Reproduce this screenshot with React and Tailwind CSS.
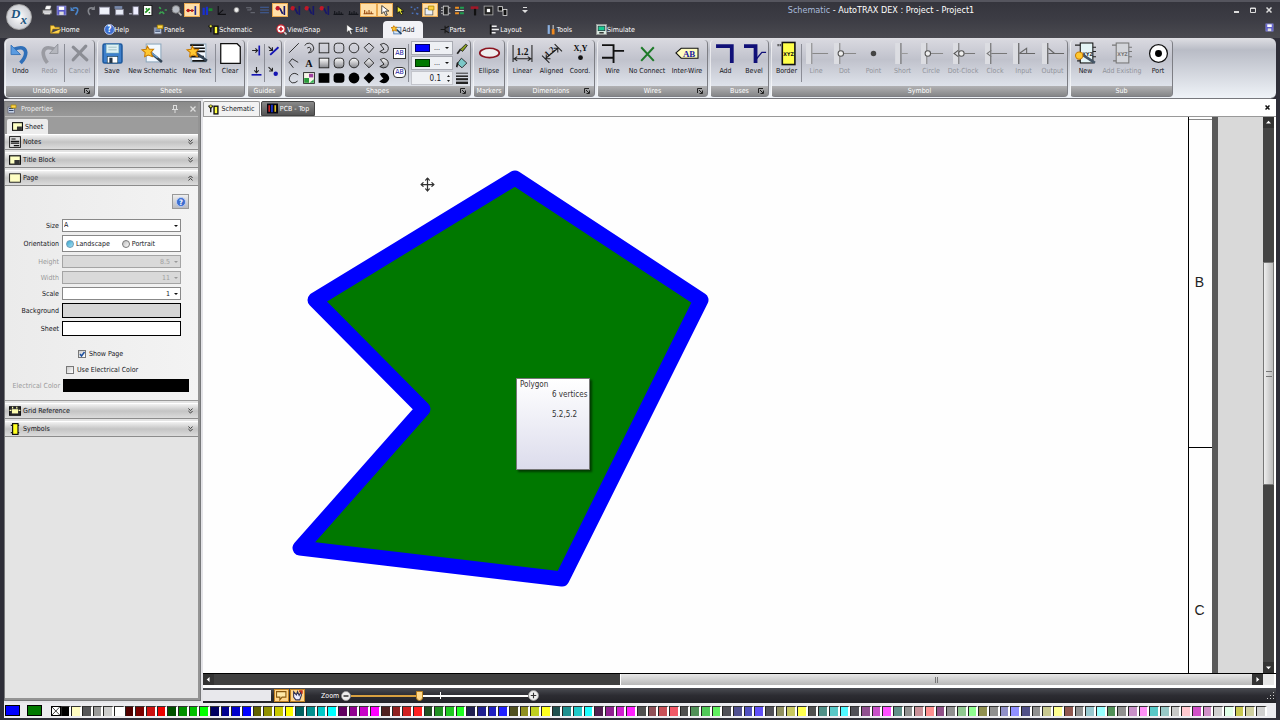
import React, { useState } from 'react';
import { Move } from 'lucide-react';

const tabs = ['Home', 'Help', 'Panels', 'Schematic', 'View/Snap', 'Edit', 'Add', 'Parts', 'Layout', 'Tools', 'Simulate'];

const palette = (
  'x 000000 fffcc0 555558 999999 cccccc ffffff 500000 7a0000 cc1010 ee0000 005000 009000 00c000 00ff00 ' +
  '000060 000090 0000cc 0000ff 606000 909000 c8c800 ffff00 006060 009090 00c8c8 00ffff 600060 900090 c800c8 ff00ff ' +
  '502020 902020 d02020 ff2020 205020 209020 20c820 20ff20 202050 202090 2020c0 2020ff 505020 909020 c0d020 ffff20 ' +
  '205050 209090 20c8c8 20ffff 502050 902090 d020d0 ff20ff 505050 905058 c85058 f05868 505050 509058 50c858 60f060 ' +
  '505058 505090 5050c0 6050f8 505058 909060 c8c860 ffff50 505050 509088 58c8c8 50f8ff 505058 905090 c850c8 ff50ff ' +
  '609088 909090 c89098 ff9090 905088 909090 90c890 90ff90 909050 909090 9090c8 9090ff 505088 909090 c8c890 ffff90 ' +
  '905850 909090 98c8d0 98ffff 509058 909090 c890c8 ff90f8 58c8c8 98c8c8 c8c8c8 ffc8d0 d050c8 d090c8 d0d0d0 e0ffe8 ' +
  'c8c850 d0d0a0 d0d0d0'
).split(' ');

const Svg = ({ size = 20, children, className = '' }) => (
  <svg width={size} height={size} viewBox="0 0 20 20" fill="none" stroke="#222" strokeWidth="1.5" className={`shrink-0 ${className}`} aria-hidden="true">
    {children}
  </svg>
);

const star = 'M5 3l2 3 4 0-2.5 3 1.5 4-4-1.5L2.500 13 3 9 0 6.500l4-.5z';

const art = {
  // ribbon
  undo: <><path d="M4 6q10-4 11 3 0 5-5 10" stroke="#2f6fb8" strokeWidth="3.500" /><path d="M1 2v9h9z" fill="#5b9be0" stroke="#2f6fb8" strokeWidth=".8" /></>,
  redo: <><path d="M15 6Q5 2 4 9q0 5 4 10" stroke="#9a9ba2" strokeWidth="3.500" /><path d="M18 1v9H10z" fill="#b4b6bd" stroke="#8e9097" strokeWidth=".8" /></>,
  cancel: <><path d="M4 4l13 12M16 3L4 16" stroke="#8b8d94" strokeWidth="3" strokeLinecap="round" /></>,
  save: <><rect x="1" y="1" width="18" height="18" rx="1.500" fill="#3d7fcb" stroke="#1e5a9e" /><rect x="4" y="1.500" width="12" height="8" fill="#dff1f5" stroke="#8bb" strokeWidth=".5" /><path d="M6 4h8M6 6.500h8" stroke="#9bb" strokeWidth=".8" /><rect x="5" y="13" width="10" height="6" fill="#fff" stroke="#245" strokeWidth=".6" /><rect x="7" y="14" width="3" height="5" fill="#234" stroke="none" /></>,
  newSheet: <><rect x="4" y="1" width="14" height="17" fill="#f3f9ff" stroke="#8ea9bd" strokeWidth="1" /><path d="M8 9l11 9" stroke="#345" strokeWidth="2.500" /><path d="M8 9l7 5" stroke="#6aa0d0" strokeWidth="1.500" /><path d={star} fill="#ffc830" stroke="#c87a00" strokeWidth="1" /></>,
  newText: <><rect x="4" y="1" width="14" height="17" fill="#f3f9ff" stroke="#8ea9bd" strokeWidth="1" /><path d="M3 2h13M6 5h11M8 8h9M3 13h13M5 17h13" stroke="#111" strokeWidth="1.600" /><path d="M8 9l11 8" stroke="#345" strokeWidth="2.500" /><path d={star} fill="#ffc830" stroke="#c87a00" strokeWidth="1" /></>,
  clear: <path d="M.7.700h15.600l3 3v15.600H.7z" fill="#fff" stroke="#111" strokeWidth="1.200" />,
  ellipse: <ellipse cx="10" cy="9.500" rx="9.300" ry="4.500" fill="#eee" stroke="#8c1420" strokeWidth="1.600" />,
  linear: <><path d="M1 2v16M19 2v16M2 15h16M5 13l-3 2 3 2M15 13l3 2-3 2" strokeWidth="1" /><text x="10" y="11" textAnchor="middle" fontSize="9" fontWeight="bold" fontFamily="Liberation Serif, serif" fill="#111" stroke="none">1.2</text></>,
  aligned: <><path d="M1 12l7 7M13 1l7 7M4 15L16 5M5 11v4h4M12 5h4v4" strokeWidth="1" /><text x="8" y="11" textAnchor="middle" fontSize="8" fontWeight="bold" fontFamily="Liberation Serif, serif" fill="#111" stroke="none" transform="rotate(-42 8 8)">1.2</text></>,
  coord: <><text x="10" y="8" textAnchor="middle" fontSize="8" fontWeight="bold" fontFamily="Liberation Serif, serif" fill="#111" stroke="none">X,Y</text><circle cx="10" cy="14" r="2.300" fill="#111" stroke="none" /></>,
  wire: <path d="M0 2h11v17M0 14h11M11 7.500h10" strokeWidth="1.800" stroke="#111" />,
  noConnect: <path d="M4 4l12 13M16 4L4 17" stroke="#1d7a28" strokeWidth="1.900" />,
  interWire: <><path d="M-1 9.500L4 5h16v9.500H4z" fill="#fffdc0" stroke="#111" strokeWidth="1" /><text x="11.500" y="13" textAnchor="middle" fontSize="8.500" fontWeight="bold" fontFamily="Liberation Serif, serif" fill="#1818a0" stroke="none">AB</text></>,
  busAdd: <path d="M1 3h15v16" stroke="#101078" strokeWidth="3.600" />,
  busBevel: <><path d="M0 3h11v16" stroke="#101078" strokeWidth="3.600" /><path d="M12 15l5-6h4" stroke="#101078" strokeWidth="1.200" /></>,
  border: <><rect x="6" y="-.5" width="12" height="21" fill="#ffff4a" stroke="#111" /><text x="12" y="12" textAnchor="middle" fontSize="5" fontWeight="bold" fill="#111" stroke="none">XYZ</text><path d="M2 1v2M4 1v2" strokeWidth="1" /></>,
  port: <><circle cx="10" cy="10" r="8.500" fill="#fff" stroke="#111" strokeWidth="1.200" /><circle cx="10" cy="10" r="3.300" fill="#000" stroke="none" /></>,
  subNew: <><rect x="5" y="0" width="12" height="19" fill="#e4f4f6" stroke="#111" strokeWidth="1" /><path d="M0 2h5M17 4h3M17 8h3M2 17h3M17 13h3" strokeWidth="1" /><text x="12" y="12" textAnchor="middle" fontSize="5" fontWeight="bold" fill="#333" stroke="none">XYZ</text><path d="M7 11l12 8" stroke="#456" strokeWidth="2.500" /><circle cx="4" cy="12" r="3.500" fill="#ffc830" stroke="#c87a00" strokeWidth="1" /></>,
  subAdd: <><rect x="4" y="0" width="12" height="19" fill="#d3d5da" stroke="#777" strokeWidth="1" /><path d="M0 2h4M16 4h3M16 8h3M1 17h3M16 13h3" stroke="#777" strokeWidth="1" /><text x="10" y="12" textAnchor="middle" fontSize="5" fontWeight="bold" fill="#777" stroke="none">XYZ</text></>,
  pLine: <><path d="M2.500 0v20" stroke="#dcdde2" strokeWidth="5" /><path d="M5.500 0v20" stroke="#888" strokeWidth="1" /><path d="M6 10h15" stroke="#888" strokeWidth="1" /></>,
  pDot: <><path d="M2.500 0v20" stroke="#dcdde2" strokeWidth="5" /><path d="M5.500 0v20M9 10h12" stroke="#888" strokeWidth="1" /><circle cx="6.500" cy="10" r="2.600" fill="#eee" stroke="#555" strokeWidth="1" /></>,
  pPoint: <circle cx="10" cy="10" r="2.600" fill="#444" stroke="none" />,
  pShort: <><path d="M5.500 0v20" stroke="#dcdde2" strokeWidth="5" /><path d="M8.500 0v20" stroke="#666" strokeWidth="1" /><path d="M9 10h6" stroke="#999" strokeWidth="1" /></>,
  pClock: <><path d="M2.500 0v20" stroke="#dcdde2" strokeWidth="5" /><path d="M5.500 0v20" stroke="#666" strokeWidth="1" /><path d="M6 7l-4 3 4 3M6 10h15" stroke="#777" strokeWidth="1" /></>,
  pDotClock: <><path d="M2.500 0v20" stroke="#dcdde2" strokeWidth="5" /><path d="M5.500 0v20M11 10h10" stroke="#777" strokeWidth="1" /><path d="M5 7l-4 3 4 3" stroke="#555" strokeWidth="1" /><circle cx="8" cy="10" r="2.600" fill="#eee" stroke="#555" strokeWidth="1" /></>,
  pInput: <><path d="M2.500 0v20" stroke="#dcdde2" strokeWidth="5" /><path d="M5.500 0v20" stroke="#555" strokeWidth="1" /><path d="M6 10l7-5v5M6 10h15" stroke="#666" strokeWidth="1" /></>,
  pOutput: <><path d="M2.500 0v20" stroke="#dcdde2" strokeWidth="5" /><path d="M5.500 0v20" stroke="#555" strokeWidth="1" /><path d="M6 5l6 5M6 10h15" stroke="#666" strokeWidth="1" /></>,
  // guides
  gV: <><path d="M15 1v18" stroke="#1414b4" strokeWidth="3" /><path d="M2 10h9M8 6l4 4-4 4" strokeWidth="2" /></>,
  gD: <><path d="M4 18L19 4" stroke="#1414b4" strokeWidth="3.500" /><path d="M1 3l7 7M8 4v6H2" strokeWidth="2" /></>,
  gH: <><path d="M1 16h18" stroke="#1414b4" strokeWidth="3" /><path d="M10 2v9M6 8l4 4 4-4" strokeWidth="2" /></>,
  gP: <><circle cx="14" cy="14" r="4" fill="#1414b4" stroke="none" /><path d="M1 2l7 7M8 3v6H2" strokeWidth="2" /></>,
  // tabs
  Home: <path d="M1 17V3h6l2 3h8v3H5L2 17h14l4-8" fill="#ffd44d" stroke="#b98a12" strokeWidth="1.200" />,
  Help: <><circle cx="10" cy="10" r="9" fill="#3d6fd0" stroke="#c9d8ff" /><text x="10" y="15" textAnchor="middle" fontSize="15" fontWeight="bold" fill="#fff" stroke="none">?</text></>,
  Panels: <><rect x="2" y="6" width="13" height="12" fill="#c4d3e8" stroke="#667" /><path d="M4 9h9M4 13h9" stroke="#346" strokeWidth="2" /><path d="M8 2h10v6H8z" fill="#ffd44d" stroke="#a80" /></>,
  Schematic: <><path d="M1 3l4 5 4-5M5 8v7" stroke="#111" strokeWidth="2.500" /><circle cx="5" cy="4" r="2.500" fill="#e8e840" stroke="#111" strokeWidth="1" /><rect x="11" y="4" width="7" height="14" fill="#ffff3a" stroke="#111" strokeWidth="2.500" /></>,
  'View/Snap': <><path d="M13 13l6 6" stroke="#ccc" strokeWidth="3" /><circle cx="9" cy="9" r="7.500" fill="#fff" stroke="#c81e28" strokeWidth="2" /><path d="M9 5v8M5 9h8" stroke="#c81e28" strokeWidth="3" /></>,
  Edit: <path d="M5 1v15l4-4 3 7 3-1-3-7h6z" fill="#fff" stroke="#222" strokeWidth="1" />,
  Add: <><rect x="5" y="6" width="13" height="12" fill="#d8e8fa" stroke="#4a78b0" /><path d="M10 10l9 8" stroke="#246" strokeWidth="3" /><path d={star} fill="#ffc830" stroke="#c87a00" /></>,
  Parts: <path d="M3 10h8M11 3v14M11 8l7-4M11 12l7 4" stroke="#181818" strokeWidth="2" />,
  Layout: <><path d="M3 1v18" stroke="#111" strokeWidth="3" /><path d="M5 4h9M5 10h13M5 16h7" stroke="#eee" strokeWidth="2.500" /></>,
  Tools: <><path d="M5 2v16" stroke="#8bb0e0" strokeWidth="4" /><path d="M13 2v9" stroke="#ccc" strokeWidth="2" /><path d="M13 9v10" stroke="#f08a20" strokeWidth="5" /></>,
  Simulate: <><rect x="1" y="1" width="18" height="18" fill="#d8e8e0" stroke="#999" /><rect x="4" y="4" width="12" height="8" fill="#18c890" stroke="#244" /><path d="M6 16h8" strokeWidth="2.500" /></>,
  // quick access
  print: <><path d="M6 8l2-6h8l-2 6" fill="#fff" stroke="#ddd" /><path d="M1 9h17v7H1z" fill="#d0d0d4" stroke="#555" /><path d="M4 16h11" stroke="#fff" strokeWidth="2" /></>,
  qSave: <><rect x="2" y="2" width="16" height="16" fill="#5858c8" stroke="#9090e0" /><rect x="5" y="3" width="10" height="6" fill="#fff" stroke="none" /><rect x="6" y="12" width="8" height="6" fill="#ddd" stroke="none" /></>,
  qUndo: <><path d="M5 6q10-3 9 4-1 5-4 8" stroke="#4a86cc" strokeWidth="3" /><path d="M1 3v8h8z" fill="#4a86cc" stroke="none" /></>,
  qRedo: <><path d="M16 6Q6 3 6 11q0 4 3 7" stroke="#83858c" strokeWidth="3" /><path d="M18 2v7h-7z" fill="#83858c" stroke="none" /></>,
  qPage: <rect x="1" y="4" width="18" height="13" fill="#eef1fa" stroke="#99a" />,
  qSplitH: <><rect x="3" y="8" width="14" height="10" fill="#e8ecf8" stroke="#889" /><rect x="1" y="2" width="14" height="5" fill="#7788aa" stroke="none" /></>,
  qSplitV: <><rect x="9" y="3" width="10" height="15" fill="#eef" stroke="#778" /><path d="M2 16h5" stroke="#ccd" strokeWidth="2" /></>,
  qFit: <><rect x="3" y="1" width="15" height="18" fill="#fff" stroke="#111" /><path d="M6 14l8-8M7 6l2 2M13 13l1 2" stroke="#169016" strokeWidth="3" /></>,
  qSel: <path d="M4 4l3 3M9 12l4 4M14 9h4M4 16l4-4" stroke="#3aa050" strokeWidth="3" />,
  qZoom: <><circle cx="9" cy="8" r="7" fill="#b8bcc4" stroke="#777" /><path d="M14 14l5 5" stroke="#bbb" strokeWidth="3" /></>,
  qSnap: <><path d="M5 10h9M1 10h2" strokeWidth="2" /><circle cx="4" cy="10" r="3" fill="#c01818" stroke="none" /><circle cx="11" cy="10" r="2.500" fill="#c01818" stroke="none" /><path d="M17 2v16" stroke="#222a90" strokeWidth="3" /></>,
  qBlocks: <><path d="M3 5v13M9 3v15" stroke="#1830d0" strokeWidth="4" /><path d="M12 6h7v5h-7z" fill="#1b8a30" stroke="none" /></>,
  qAxis: <path d="M4 2v15h14M4 17l9-8" stroke="#101014" strokeWidth="2" />,
  qDot: <circle cx="10" cy="9" r="4.500" fill="#eee" stroke="#888" />,
  qDim: <path d="M2 5h9v4H4M10 14h8" stroke="#777a84" />,
  qLines: <path d="M2 4h16M2 9h16M2 14h16" stroke="#4060a0" strokeWidth="2" />,
  qPins: <><circle cx="5" cy="6" r="4" fill="#c01828" stroke="none" /><path d="M9 6l5 10M17 2v16" stroke="#181868" strokeWidth="3" /></>,
  qRuler: <path d="M1 17h18M3 17v-6M7 17v-4M11 17v-6M15 17v-4" stroke="#14161c" strokeWidth="2" />,
  qRulerOn: <path d="M1 16h18M3 16v-7M7 16v-4M11 16v-7M15 16v-4" stroke="#9a4a10" strokeWidth="2" />,
  qPointer: <path d="M5 1v15l4-4 3 7 3-1-3-7h6z" fill="#fff" stroke="#222" />,
  qPick: <path d="M4 2v13l4-3 3 6 3-2-3-5h5z" fill="#e8e830" stroke="#111" />,
  qNodes: <path d="M3 4h3M9 8h3M5 15h3M14 5h3M13 15l4 2" stroke="#4a70b8" strokeWidth="3" />,
  qPanel: <><rect x="2" y="6" width="14" height="12" fill="#e8eef8" stroke="#666" /><path d="M8 2h10v7H8z" fill="#ffcf40" stroke="#a80" /></>,
  qChip: <><rect x="6" y="2" width="9" height="16" fill="#222" stroke="#ddd" /><path d="M2 5h3M2 10h3M2 15h3M16 5h3M16 15h3" stroke="#ddd" /></>,
  qComp: <><path d="M2 5h7M2 15h7" stroke="#f09020" strokeWidth="4" /><path d="M11 5h7M11 15h7" stroke="#20a050" strokeWidth="4" /><path d="M2 10h16" stroke="#ddd" strokeWidth="2" /></>,
  qHammer: <><path d="M3 5h14" stroke="#a01828" strokeWidth="5" /><path d="M11 7v12" stroke="#111" strokeWidth="4" /></>,
  qTarget: <><rect x="2" y="2" width="16" height="16" fill="#222" stroke="#aaa" /><rect x="7" y="7" width="6" height="6" fill="#fff" stroke="none" /></>,
  qCopy: <><rect x="2" y="3" width="8" height="8" fill="#111" stroke="#ddd" /><rect x="11" y="8" width="7" height="11" fill="#111" stroke="#ddd" /></>,
  // property panel
  sheet: <><rect x="1" y="3" width="18" height="14" fill="#fdffc4" stroke="#111" strokeWidth="2" /><path d="M9 10h9v7H9z" fill="#333" stroke="none" /></>,
  notes: <><rect x="1" y="1" width="18" height="18" fill="#ddd" stroke="#111" /><path d="M4 5h7M3 9h14M3 12h14M8 16h9" stroke="#111" strokeWidth="2" /></>,
  page: <rect x="1" y="3" width="18" height="14" fill="#ffffc4" stroke="#111" />,
  grid: <><rect x="1" y="3" width="18" height="14" fill="#333" stroke="#111" strokeWidth="2" /><rect x="5" y="7" width="10" height="7" fill="#ffffb0" stroke="none" /><path d="M6 3v3M13 3v3M1 9h3M16 9h3" stroke="#ffffb0" strokeWidth="2" /></>,
  symbols: <><path d="M3 4h14M3 16h14" strokeWidth="2" /><rect x="6" y="1" width="9" height="18" fill="#ffff20" stroke="#111" strokeWidth="2" /></>,
  pcb: <><rect x="0" y="1" width="20" height="18" fill="#050510" stroke="none" /><path d="M4 4v12" stroke="#c02020" strokeWidth="3" /><path d="M9 3v14" stroke="#2038e0" strokeWidth="3" /><path d="M15 4v12" stroke="#e0c020" strokeWidth="3" /></>,
};

const quick = ['print', 'qSave', 'qUndo', 'qRedo', 'qPage', 'qSplitH', 'qSplitV', 'qFit', 'qSel', 'qZoom', 'qSnap*', 'qBlocks', 'qAxis', 'qDot', 'qDim', 'qLines', 'qPins*', 'qPins', 'qPins', 'qPins', 'qRuler', 'qRuler', 'qRulerOn*', 'qPointer*', 'qPick', 'qNodes', 'qPanel*', 'qChip', 'qComp', 'qHammer', 'qTarget', 'qCopy'];

const shapeTools = [
  ['Line', <path d="M2 18L18 2" />],
  ['Spiral', <path d="M3 6Q5 1 11 2t7 8q-1 8-9 8 6-3 4-7t-6-1" />],
  ['Rectangle', <rect x="2" y="2" width="16" height="16" />],
  ['Rounded', <rect x="2" y="2" width="16" height="16" rx="5" />],
  ['Circle', <circle cx="10" cy="10" r="8" />],
  ['Diamond', <path d="M10 2l8 7-8 9-8-9z" />],
  ['Pie', <path d="M4 4q6-4 11 1 5 6-1 12-5 3-11-1l7-4-3-4z" />],
  ['Polyline', <path d="M7 3L2 9l7 9M7 3l10 6" />],
  ['Text', <text x="10" y="17" textAnchor="middle" fontSize="17" fontWeight="bold" fontFamily="Liberation Serif, serif" fill="#111" stroke="none">A</text>],
  ['Shaded rectangle', <rect x="2" y="2" width="16" height="16" fill="url(#shade)" />],
  ['Shaded rounded', <rect x="2" y="2" width="16" height="16" rx="5" fill="url(#shade)" />],
  ['Shaded circle', <circle cx="10" cy="10" r="8" fill="url(#shade)" />],
  ['Shaded diamond', <path d="M10 2l8 8-8 8-8-8z" fill="url(#shade)" />],
  ['Shaded pie', <path d="M4 4q6-4 11 1 5 6-1 12-5 3-11-1l7-4-3-4z" fill="url(#shade)" />],
  ['Arc', <path d="M17 5Q10-1 4 6q-5 8 3 12 5 1 9-3" />],
  ['Image', <><rect x="1" y="1" width="18" height="18" fill="#f6f6e8" /><path d="M2 10h8v8H2z" fill="#2a9a3a" stroke="none" /><path d="M10 3h7v6h-7z" fill="#a040a0" stroke="none" /><path d="M11 18l7-6v6z" fill="#30b050" stroke="none" /></>],
  ['Filled rectangle', <rect x="1" y="2" width="18" height="16" fill="#000" stroke="none" />],
  ['Filled rounded', <rect x="1" y="2" width="18" height="16" rx="5" fill="#000" stroke="none" />],
  ['Filled circle', <circle cx="10" cy="10" r="9" fill="#000" stroke="none" />],
  ['Filled diamond', <path d="M10 1l9 9-9 9-9-9z" fill="#000" stroke="none" />],
  ['Filled pie', <path d="M3 3q7-4 13 1 6 7-1 13-6 4-13-1l7-5-3-3z" fill="#000" stroke="none" />],
];

function Group({ label, launcher, children }) {
  return (
    <section className="flex flex-col shrink-0 rounded-sm border-r border-b border-[#7d7e84] border-l border-l-white/60 bg-linear-to-b from-[#d8d8df] via-[#c0c2cc] via-35% to-[#eaeff6]">
      <div className="flex flex-1">{children}</div>
      <div className="relative flex h-[10px] items-center justify-center bg-linear-to-b from-[#b2b2b4] to-[#858688] leading-none text-white">
        {label}
        {launcher && (
          <button aria-label={`${label} options`} className="absolute right-1 top-0.5">
            <svg width="6" height="6" viewBox="0 0 6 6" fill="none" stroke="#222"><path d="M.5 5V.5H5M2 2l3 3M5.500 2.500v3h-3" /></svg>
          </button>
        )}
      </div>
    </section>
  );
}

function Tool({ icon, label, width, disabled }) {
  return (
    <button disabled={disabled} className={`flex flex-col items-center pt-[3px] gap-[3px] whitespace-nowrap ${disabled ? 'text-[#92949b]' : 'text-[#16161c]'} ${width}`}>
      <Svg size={21} className="overflow-visible">{art[icon]}</Svg>
      <span className="leading-2">{label}</span>
    </button>
  );
}

const Divider = () => <div className="my-1 w-px bg-[#8b8d96]" />;

function ColorDrop({ color, name }) {
  return (
    <button aria-label={name} className="flex h-[14px] w-[42px] items-center gap-1 border border-[#a9abb3] bg-[#eef0f4] px-[3px]">
      <span className={`h-2 w-[15px] border border-black/60 ${color}`} />
      <span className="flex-1 text-left leading-none">...</span>
      <Caret />
    </button>
  );
}

const Caret = ({ dim }) => (
  <svg width="4" height="2" viewBox="0 0 4 2" className="shrink-0" aria-hidden="true"><path d="M0 0h4L2 2z" fill={dim ? '#999' : '#111'} /></svg>
);

function Ribbon() {
  return (
    <div className="mx-1 flex h-[61px] gap-0.5 rounded-md border-b border-[#77787d] bg-linear-to-b from-[#dfdfe4] via-[#b9bcc6] via-20% to-[#eff3f8] pt-0.5 pb-px pl-px">
      <Group label="Undo/Redo" launcher>
        <Tool icon="undo" label="Undo" width="w-[29px]" />
        <Tool icon="redo" label="Redo" width="w-[29px]" disabled />
        <Divider />
        <Tool icon="cancel" label="Cancel" width="w-[29px]" disabled />
      </Group>
      <Group label="Sheets">
        <Tool icon="save" label="Save" width="w-[28px]" />
        <Tool icon="newSheet" label="New Schematic" width="w-[53px]" />
        <Tool icon="newText" label="New Text" width="w-[36px]" />
        <Divider />
        <Tool icon="clear" label="Clear" width="w-[28px]" />
      </Group>
      <Group label="Guides">
        {[['gV', 'gH'], ['gD', 'gP']].map((col, i) => (
          <React.Fragment key={i}>
            {i > 0 && <Divider />}
            <div className="flex w-4 flex-col items-center justify-around pb-1">
              {col.map(g => <button key={g} aria-label={g}><Svg size={11}>{art[g]}</Svg></button>)}
            </div>
          </React.Fragment>
        ))}
      </Group>
      <Group label="Shapes" launcher>
        <svg width="0" height="0" className="absolute" aria-hidden="true">
          <linearGradient id="shade" x2="0" y2="1"><stop stopColor="#fff" /><stop offset="1" stopColor="#85868c" /></linearGradient>
        </svg>
        <div className="grid grid-cols-[repeat(7,15px)] items-center justify-items-center pl-px">
          {shapeTools.map(([name, shape]) => (
            <button key={name} aria-label={name}><Svg size={12}>{shape}</Svg></button>
          ))}
        </div>
        <div className="flex w-[17px] flex-col items-center justify-evenly">
          <button className="border border-[#333] bg-white px-px leading-[9px] text-[#1818a0]">AB</button>
          <button className="rounded-sm border border-[#333] bg-white px-px leading-[9px] text-[#1818a0]">AB</button>
        </div>
        <Divider />
        <div className="flex flex-col justify-evenly pl-0.5">
          <ColorDrop color="bg-[#0000ff]" name="Line colour" />
          <ColorDrop color="bg-[#007800]" name="Fill colour" />
          <label className="flex h-[14px] w-[42px] items-center border border-[#c3c5cc] bg-[#eef0f4]">
            <input aria-label="Line width" defaultValue="0.1" className="w-0 flex-1 pr-1 text-right text-[8px] leading-none" />
            <svg width="7" height="9" viewBox="0 0 7 9"><path d="M2 3l1.500-2L5 3zM2 6l1.500 2L5 6z" fill="#222" /></svg>
          </label>
        </div>
        <div className="flex w-[17px] flex-col items-center justify-evenly">
          <Svg size={12}><path d="M2 18l6-8" strokeWidth="3" /><path d="M7 11l9-9 3 2-8 10z" fill="#8aa020" /></Svg>
          <Svg size={12}><path d="M9 2l9 8-8 8-8-7z" fill="#7cc8c8" /><path d="M3 9l-2 8" strokeWidth="3" /></Svg>
          <Svg size={12}><path d="M0 2h20" /><path d="M0 7h20" strokeWidth="2.500" /><path d="M0 12h20" strokeWidth="3.500" /><path d="M0 18h20" strokeWidth="4" /></Svg>
        </div>
      </Group>
      <Group label="Markers">
        <Tool icon="ellipse" label="Ellipse" width="w-[30px]" />
      </Group>
      <Group label="Dimensions" launcher>
        <Tool icon="linear" label="Linear" width="w-[29px]" />
        <Tool icon="aligned" label="Aligned" width="w-[29px]" />
        <Tool icon="coord" label="Coord." width="w-[28px]" />
      </Group>
      <Group label="Wires" launcher>
        <Tool icon="wire" label="Wire" width="w-[29px]" />
        <Tool icon="noConnect" label="No Connect" width="w-[40px]" />
        <Tool icon="interWire" label="Inter-Wire" width="w-[40px]" />
      </Group>
      <Group label="Buses" launcher>
        <Tool icon="busAdd" label="Add" width="w-[29px]" />
        <Tool icon="busBevel" label="Bevel" width="w-[28px]" />
      </Group>
      <Group label="Symbol">
        <Tool icon="border" label="Border" width="w-[29px]" />
        <Divider />
        <Tool icon="pLine" label="Line" width="w-[28px]" disabled />
        <Tool icon="pDot" label="Dot" width="w-[29px]" disabled />
        <Tool icon="pPoint" label="Point" width="w-[29px]" disabled />
        <Tool icon="pShort" label="Short" width="w-[29px]" disabled />
        <Tool icon="pDot" label="Circle" width="w-[28px]" disabled />
        <Tool icon="pDotClock" label="Dot-Clock" width="w-[36px]" disabled />
        <Tool icon="pClock" label="Clock" width="w-[28px]" disabled />
        <Tool icon="pInput" label="Input" width="w-[29px]" disabled />
        <Tool icon="pOutput" label="Output" width="w-[29px]" disabled />
      </Group>
      <Group label="Sub">
        <Tool icon="subNew" label="New" width="w-[29px]" />
        <Tool icon="subAdd" label="Add Existing" width="w-[44px]" disabled />
        <Tool icon="port" label="Port" width="w-[28px]" />
      </Group>
    </div>
  );
}

function SectionBar({ icon, label, open, onClick }) {
  return (
    <button onClick={onClick} className="flex h-4 w-full shrink-0 items-center gap-0.5 border-t border-b border-t-white border-b-[#8c8c8c] bg-linear-to-b from-[#f2f2f2] via-[#c4c4c4] to-[#dcdcdc] pr-[5px] pl-1 text-left">
      <Svg size={12}>{art[icon]}</Svg>
      <span className="flex-1">{label}</span>
      <svg width="5" height="6" viewBox="0 0 6 7" fill="none" stroke="#222" className={open ? 'rotate-180' : ''}><path d="M.5.500L3 3 5.500.500M.5 3.500L3 6l2.500-2.500" /></svg>
    </button>
  );
}

const NumberBox = ({ id, value, disabled }) => (
  <div className={`flex h-[13px] items-center gap-1 border pr-0.5 ${disabled ? 'border-[#a4a4a4] bg-[#d9d9d9] text-[#a0a0a0]' : 'border-[#888] bg-white'}`}>
    <input id={id} defaultValue={value} disabled={disabled} className="w-0 flex-1 text-right leading-none" />
    <Caret dim={disabled} />
  </div>
);

function Properties() {
  const [open, setOpen] = useState(true);
  const [orientation, setOrientation] = useState('Landscape');
  const box = 'appearance-none size-2 shrink-0 border border-[#777] bg-linear-to-br from-[#ccc] to-white';

  return (
    <aside className="flex w-[197px] shrink-0 flex-col border border-[#77787a] bg-[#949494] pr-0.5 pb-0.5 mt-0.5 mb-0.5">
      <header className="flex h-[14px] items-center gap-1 bg-linear-to-b from-[#8a8a8a] to-[#999] px-0.5 text-[#eee]">
        <Svg size={10}>{art.Panels}</Svg>
        <h2 className="flex-1">Properties</h2>
        <button aria-label="Pin" className="mr-2">
          <svg width="6" height="8" viewBox="0 0 6 8" fill="none" stroke="#ddd"><path d="M1 .5h4M1.500 0v4M4.500 0v4M0 4.500h6M3 5v3" /></svg>
        </button>
        <button aria-label="Close panel"><svg width="6" height="6" viewBox="0 0 6 6" stroke="#ddd" strokeWidth="1.300"><path d="M.5.500l5 5M5.500.500l-5 5" /></svg></button>
      </header>
      <div className="flex h-[18px] items-end border-t border-[#bbb] bg-[#9c9c9c] pl-0.5">
        <button className="flex h-[15px] w-[41px] items-center justify-center gap-0.5 rounded-t-xs bg-[#ececec]">
          <Svg size={11}>{art.sheet}</Svg>Sheet
        </button>
      </div>
      <div className="flex flex-1 flex-col gap-0.5 bg-[#e4e4e4]">
        <SectionBar icon="notes" label="Notes" />
        <SectionBar icon="sheet" label="Title Block" />
        <div className="border-b border-[#999]">
          <SectionBar icon="page" label="Page" open={open} onClick={() => setOpen(!open)} />
          {open && (
            <div className="bg-linear-to-r from-[#ebebeb] to-[#f3f3f3] pt-2 pb-2">
              <div className="flex justify-end pr-[9px]">
                <button aria-label="Page help" className="flex h-[15px] w-[17px] items-center justify-center border border-[#999] bg-linear-to-b from-[#eee] to-[#b8bac0]">
                  <Svg size={10}>{art.Help}</Svg>
                </button>
              </div>
              <div className="mt-2.5 grid grid-cols-[54px_1fr] items-center gap-x-[3px] gap-y-[3px] pr-[17px]">
                <label htmlFor="size" className="text-right">Size</label>
                <div className="flex h-[13px] items-center border border-[#888] bg-white pr-0.5">
                  <select id="size" className="flex-1 appearance-none pl-px leading-none"><option>A</option><option>B</option></select>
                  <Caret />
                </div>
                <span className="text-right">Orientation</span>
                <div className="flex h-[17px] items-center gap-3 border border-[#888] bg-white pl-[3px]">
                  {['Landscape', 'Portrait'].map(o => (
                    <label key={o} className="flex items-center gap-0.5">
                      <input type="radio" name="orientation" checked={orientation === o} onChange={() => setOrientation(o)} className="size-2 appearance-none rounded-full border border-[#777] bg-linear-to-br from-[#bbb] to-white checked:border-[#6a9cb8] checked:from-[#2fa4cc] checked:to-[#a4e2f4]" />
                      {o}
                    </label>
                  ))}
                </div>
                <label htmlFor="height" className="text-right text-[#999]">Height</label>
                <NumberBox id="height" value="8.5" disabled />
                <label htmlFor="width" className="text-right text-[#999]">Width</label>
                <NumberBox id="width" value="11" disabled />
                <label htmlFor="scale" className="text-right">Scale</label>
                <NumberBox id="scale" value="1" />
                <label htmlFor="background" className="text-right">Background</label>
                <button id="background" className="h-[15px] border border-black bg-[#d6d6d6]" />
                <label htmlFor="sheet" className="text-right">Sheet</label>
                <button id="sheet" className="h-[15px] border border-black bg-white" />
              </div>
              <label className="mt-[14px] flex items-center gap-[3px] pl-[73px] leading-2">
                <span className="relative flex">
                  <input type="checkbox" defaultChecked className={`peer ${box}`} />
                  <svg viewBox="0 0 8 8" className="pointer-events-none absolute inset-0 hidden peer-checked:block" fill="none" stroke="#1c4fa0" strokeWidth="1.500"><path d="M2 4l1.500 2L6.500 2" /></svg>
                </span>
                Show Page
              </label>
              <label className="mt-2 flex items-center gap-[3px] pl-[61px] leading-2">
                <input type="checkbox" className={box} />
                Use Electrical Color
              </label>
              <div className="mt-[5px] flex items-center gap-[3px] pr-[9px]">
                <label htmlFor="electrical" className="w-[55px] text-right whitespace-nowrap text-[#999]">Electrical Color</label>
                <button id="electrical" disabled className="h-[13px] flex-1 bg-black" />
              </div>
            </div>
          )}
        </div>
        <SectionBar icon="grid" label="Grid Reference" />
        <SectionBar icon="symbols" label="Symbols" />
      </div>
    </aside>
  );
}

function Canvas() {
  return (
    <div className="relative flex flex-1 overflow-hidden bg-[#fefefe]">
      <svg className="absolute top-0 left-0" width="700" height="520" viewBox="0 0 700 520">
        <polygon points="312,61 498,183 359,462 97,431 220,292 112,183" fill="#007800" stroke="#0000ff" strokeWidth="15" strokeLinejoin="round" />
      </svg>
      <Move size={15} strokeWidth={2} color="#333" className="absolute top-[60px] left-[217px]" />
      <div role="tooltip" className="absolute top-[261px] left-[313px] h-[92px] w-[74px] border border-[#777] bg-linear-to-b from-white to-[#dcdcec] px-[3px] pt-px text-[8px] leading-[10px] text-[#333] shadow-[2px_2px_2px_rgba(0,0,0,0.5)]">
        <p>Polygon</p>
        <p className="pl-8 whitespace-nowrap">6 vertices</p>
        <p className="pt-2.5 pl-8">5.2,5.2</p>
      </div>
      <div className="flex-1" />
      <div className="flex w-6 flex-col overflow-hidden border-l border-black pt-0.5 font-[Liberation_Sans] text-[14px] text-[#222]">
        <div className="flex h-[329px] shrink-0 items-center justify-center border-t border-b border-t-[#888] border-b-black pr-0.5 pb-1">B</div>
        <div className="flex h-[328px] shrink-0 items-center justify-center pr-0.5 pb-1">C</div>
      </div>
      <div className="w-1.5 bg-[#5a5a5a]" />
      <div className="w-[45px] bg-[#d9d9d9]" />
    </div>
  );
}

const Arrow = ({ label, d }) => (
  <button aria-label={label} className="flex size-[11px] shrink-0 items-center justify-center bg-[#333]">
    <svg width="5" height="5" viewBox="0 0 7 7"><path d={d} fill="#fff" /></svg>
  </button>
);

function Document() {
  return (
    <main className="flex min-w-0 flex-1 flex-col bg-white">
      <div className="flex h-[18px] items-end border-b border-[#999]">
        <button className="flex h-[15px] w-[57px] items-center justify-center gap-0.5 rounded-t-xs border border-b-0 border-[#999] bg-[#f2f2f2]">
          <Svg size={11}>{art.Schematic}</Svg>Schematic
        </button>
        <button className="ml-px flex h-[15px] w-[54px] items-center justify-center gap-0.5 rounded-t-xs border border-[#444] bg-linear-to-b from-[#8a8a8a] to-[#555] text-white">
          <Svg size={11}>{art.pcb}</Svg>PCB - Top
        </button>
        <button aria-label="Close document" className="mr-1.5 mb-1.5 ml-auto"><svg width="5" height="5" viewBox="0 0 5 5" stroke="#111" strokeWidth="1.500"><path d="M.5.500l4 4M4.500.500l-4 4" /></svg></button>
      </div>
      <div className="flex min-h-0 flex-1 pr-0.5">
        <Canvas />
        <div className="flex w-[11px] flex-col bg-[#444]">
          <Arrow label="Scroll up" d="M0 5h7L3.500 1z" />
          <div className="flex-135" />
          <div className="flex flex-222 flex-col items-center justify-center border border-[#777] bg-linear-to-r from-[#eee] to-[#bbb]">
            <span className="h-1.5 w-1.5 border-y border-[#777]" />
          </div>
          <div className="flex-178" />
          <Arrow label="Scroll down" d="M0 2h7L3.500 6z" />
        </div>
      </div>
      <div className="flex border-t border-black pr-0.5">
        <div className="flex flex-1 bg-[#404040]">
          <Arrow label="Scroll left" d="M5 0v7L1 3.500z" />
          <div className="flex-405" />
          <div className="flex flex-630 items-center justify-center border-l border-white bg-linear-to-b from-[#e8e8e8] to-[#b8b8b8]">
            <span className="h-1.5 w-[3px] border-x border-[#777]" />
          </div>
          <Arrow label="Scroll right" d="M2 0v7l4-3.500z" />
        </div>
        <div className="w-[11px] bg-[#e6e6e6]" />
      </div>
      <StatusBar />
    </main>
  );
}

function StatusBar() {
  const [zoom, setZoom] = useState(38);
  return (
    <footer className="mt-[3px] flex h-[15px] shrink-0 items-center bg-linear-to-b from-[#4a4c52] via-[#2c2c32] to-[#232328] text-white">
      <div className="h-[11px] w-[68px] bg-[#e8e8ec]" />
      <div className="ml-[3px] flex gap-px">
        <button aria-label="Hints" className="flex h-[13px] w-[15px] items-center justify-center border border-[#c08020] bg-[#ffd58a]">
          <Svg size={11}><path d="M1 3h17v10h-7l-4 5v-5H1z" fill="#ffe9a8" stroke="#8a5a10" strokeWidth="2" /></Svg>
        </button>
        <button aria-label="Pan" className="flex h-[13px] w-[15px] items-center justify-center border border-[#c08020] bg-[#ffd58a]">
          <Svg size={11}><path d="M3 3v10l4 5h7l3-8V2l-4 8-3-7-2 6z" fill="#eef" stroke="#335" strokeWidth="2" /><path d="M13 2h5v5" stroke="#c03020" strokeWidth="3" /></Svg>
        </button>
      </div>
      <label htmlFor="zoom" className="ml-4">Zoom</label>
      <button aria-label="Zoom out" className="ml-0.5" onClick={() => setZoom(zoom - 5)}>
        <Svg size={10}><circle cx="10" cy="10" r="9" fill="#eee" stroke="#999" /><path d="M5 10h10" stroke="#333" strokeWidth="3" /></Svg>
      </button>
      <div className="relative flex w-[177px] items-center">
        <span className="absolute left-1/2 h-[7px] w-px bg-white" />
        <input
          id="zoom" type="range" min="0" max="100" value={zoom} onChange={e => setZoom(+e.target.value)}
          style={{ backgroundImage: `linear-gradient(to right, #d8a040 ${zoom}%, #ffffff ${zoom}%)` }}
          className="relative h-0.5 w-full appearance-none [&::-webkit-slider-thumb]:h-[10px] [&::-webkit-slider-thumb]:w-[7px] [&::-webkit-slider-thumb]:appearance-none [&::-webkit-slider-thumb]:rounded-b-sm [&::-webkit-slider-thumb]:border [&::-webkit-slider-thumb]:border-[#b98020] [&::-webkit-slider-thumb]:bg-[#ffd98c]"
        />
      </div>
      <button aria-label="Zoom in" onClick={() => setZoom(zoom + 5)}>
        <Svg size={11}><circle cx="10" cy="10" r="9" fill="#eee" stroke="#999" /><path d="M5 10h10M10 5v10" stroke="#333" strokeWidth="2" /></Svg>
      </button>
      <svg width="8" height="8" viewBox="0 0 8 8" className="ml-auto mr-px" fill="#ccc"><path d="M6 0h1v1H6zM6 3h1v1H6zM3 3h1v1H3zM6 6h1v1H6zM3 6h1v1H3zM0 6h1v1H0z" /></svg>
    </footer>
  );
}

function App() {
  return (
    <div className="flex h-screen flex-col overflow-hidden bg-[#2e2e38] font-['DejaVu_Sans_Condensed','DejaVu_Sans',sans-serif] text-[7px] leading-[10px] text-[#16161c]">
      <header className="relative bg-linear-to-b from-[#34343c] via-[#3c3c44] to-[#4a4a50]">
        <button aria-label="Application menu" className="absolute top-1 left-[6px] z-10 flex size-[26px] items-center justify-center rounded-full border border-[#aaa] bg-radial from-white to-[#b9bcc4] font-[Liberation_Serif] text-[13px] font-bold text-[#1d5580] italic">
          <span className="-mt-1.5">D</span><span className="mt-1.5">x</span>
        </button>
        <div className="flex h-[18px] items-center border-t-2 border-[#55555e] pr-2">
          <nav aria-label="Quick access" className="ml-10 flex w-[470px] shrink-0">
            {quick.map((q, i) => (
              <button key={i} aria-label={q.replace('*', '')} className={`flex h-[14px] flex-1 items-center justify-center ${q.endsWith('*') ? 'border border-[#e8a850] bg-[#ffdfa8]' : ''}`}>
                <Svg size={11}>{art[q.replace('*', '')]}</Svg>
              </button>
            ))}
          </nav>
          <button aria-label="Customize" className="ml-3"><svg width="6" height="6" viewBox="0 0 6 6"><path d="M1 0h4v1H1zM0 3h6L3 6z" fill="#ddd" /></svg></button>
          <h1 className="flex-1 text-center text-[9px] whitespace-nowrap text-white"><span className="text-[#a9bbdc]">Schematic</span> - AutoTRAX DEX : Project - Project1</h1>
          <div className="flex items-center gap-2.5">
            <button aria-label="Minimize"><svg width="6" height="6" viewBox="0 0 6 6"><path d="M0 4h5v2H0z" fill="#ddd" /></svg></button>
            <button aria-label="Maximize"><svg width="6" height="6" viewBox="0 0 6 6" fill="none" stroke="#ddd"><path d="M.5 1h5v4.500h-5zM0 1.500h6" /></svg></button>
            <button aria-label="Close"><svg width="6" height="6" viewBox="0 0 6 6" stroke="#ddd" strokeWidth="1.500"><path d="M.5.500l5 5M5.500.500l-5 5" /></svg></button>
          </div>
        </div>
        <nav className="flex h-5 items-end gap-2 pr-1.5 pl-[42px]">
          {tabs.map(t => (
            <button key={t} className={`flex h-[17px] items-center rounded-t-sm px-2 ${t === 'Add' ? 'bg-[#f2f2f6] text-[#16161c]' : 'text-white'}`}>
              <Svg size={11}>{art[t]}</Svg>{t}
            </button>
          ))}
          <button aria-label="Save layout" className="mb-1.5 ml-auto"><Svg size={9}>{art.qSave}</Svg></button>
        </nav>
      </header>
      <Ribbon />
      <div className="mx-1 flex min-h-0 flex-1 gap-0.5 bg-[#e4e4e8]">
        <Properties />
        <Document />
      </div>
      <div className="mx-1 mb-0.5 flex h-[15px] items-center bg-[#ececf0] pr-2.5 pl-px">
        <button aria-label="Current line colour" className="h-[11px] w-[15px] border border-black bg-[#0000ff]" />
        <button aria-label="Current fill colour" className="ml-[7px] h-[11px] w-[15px] border border-black bg-[#007800]" />
        <div className="ml-[9px] flex flex-1">
          {palette.map((c, i) => c === 'x' ? (
            <button key={i} aria-label="No colour" className="h-2.5 flex-1 border border-black bg-white">
              <svg viewBox="0 0 8 8" preserveAspectRatio="none" className="size-full" stroke="#111" strokeWidth=".8"><path d="M0 0l8 8M8 0L0 8" /></svg>
            </button>
          ) : (
            <button key={i} aria-label={`#${c}`} className="h-2.5 flex-1 border-t border-r-2 border-l border-t-[#333] border-r-white border-l-[#222]" style={{ backgroundColor: `#${c}` }} />
          ))}
        </div>
      </div>
    </div>
  );
}

export default App;
